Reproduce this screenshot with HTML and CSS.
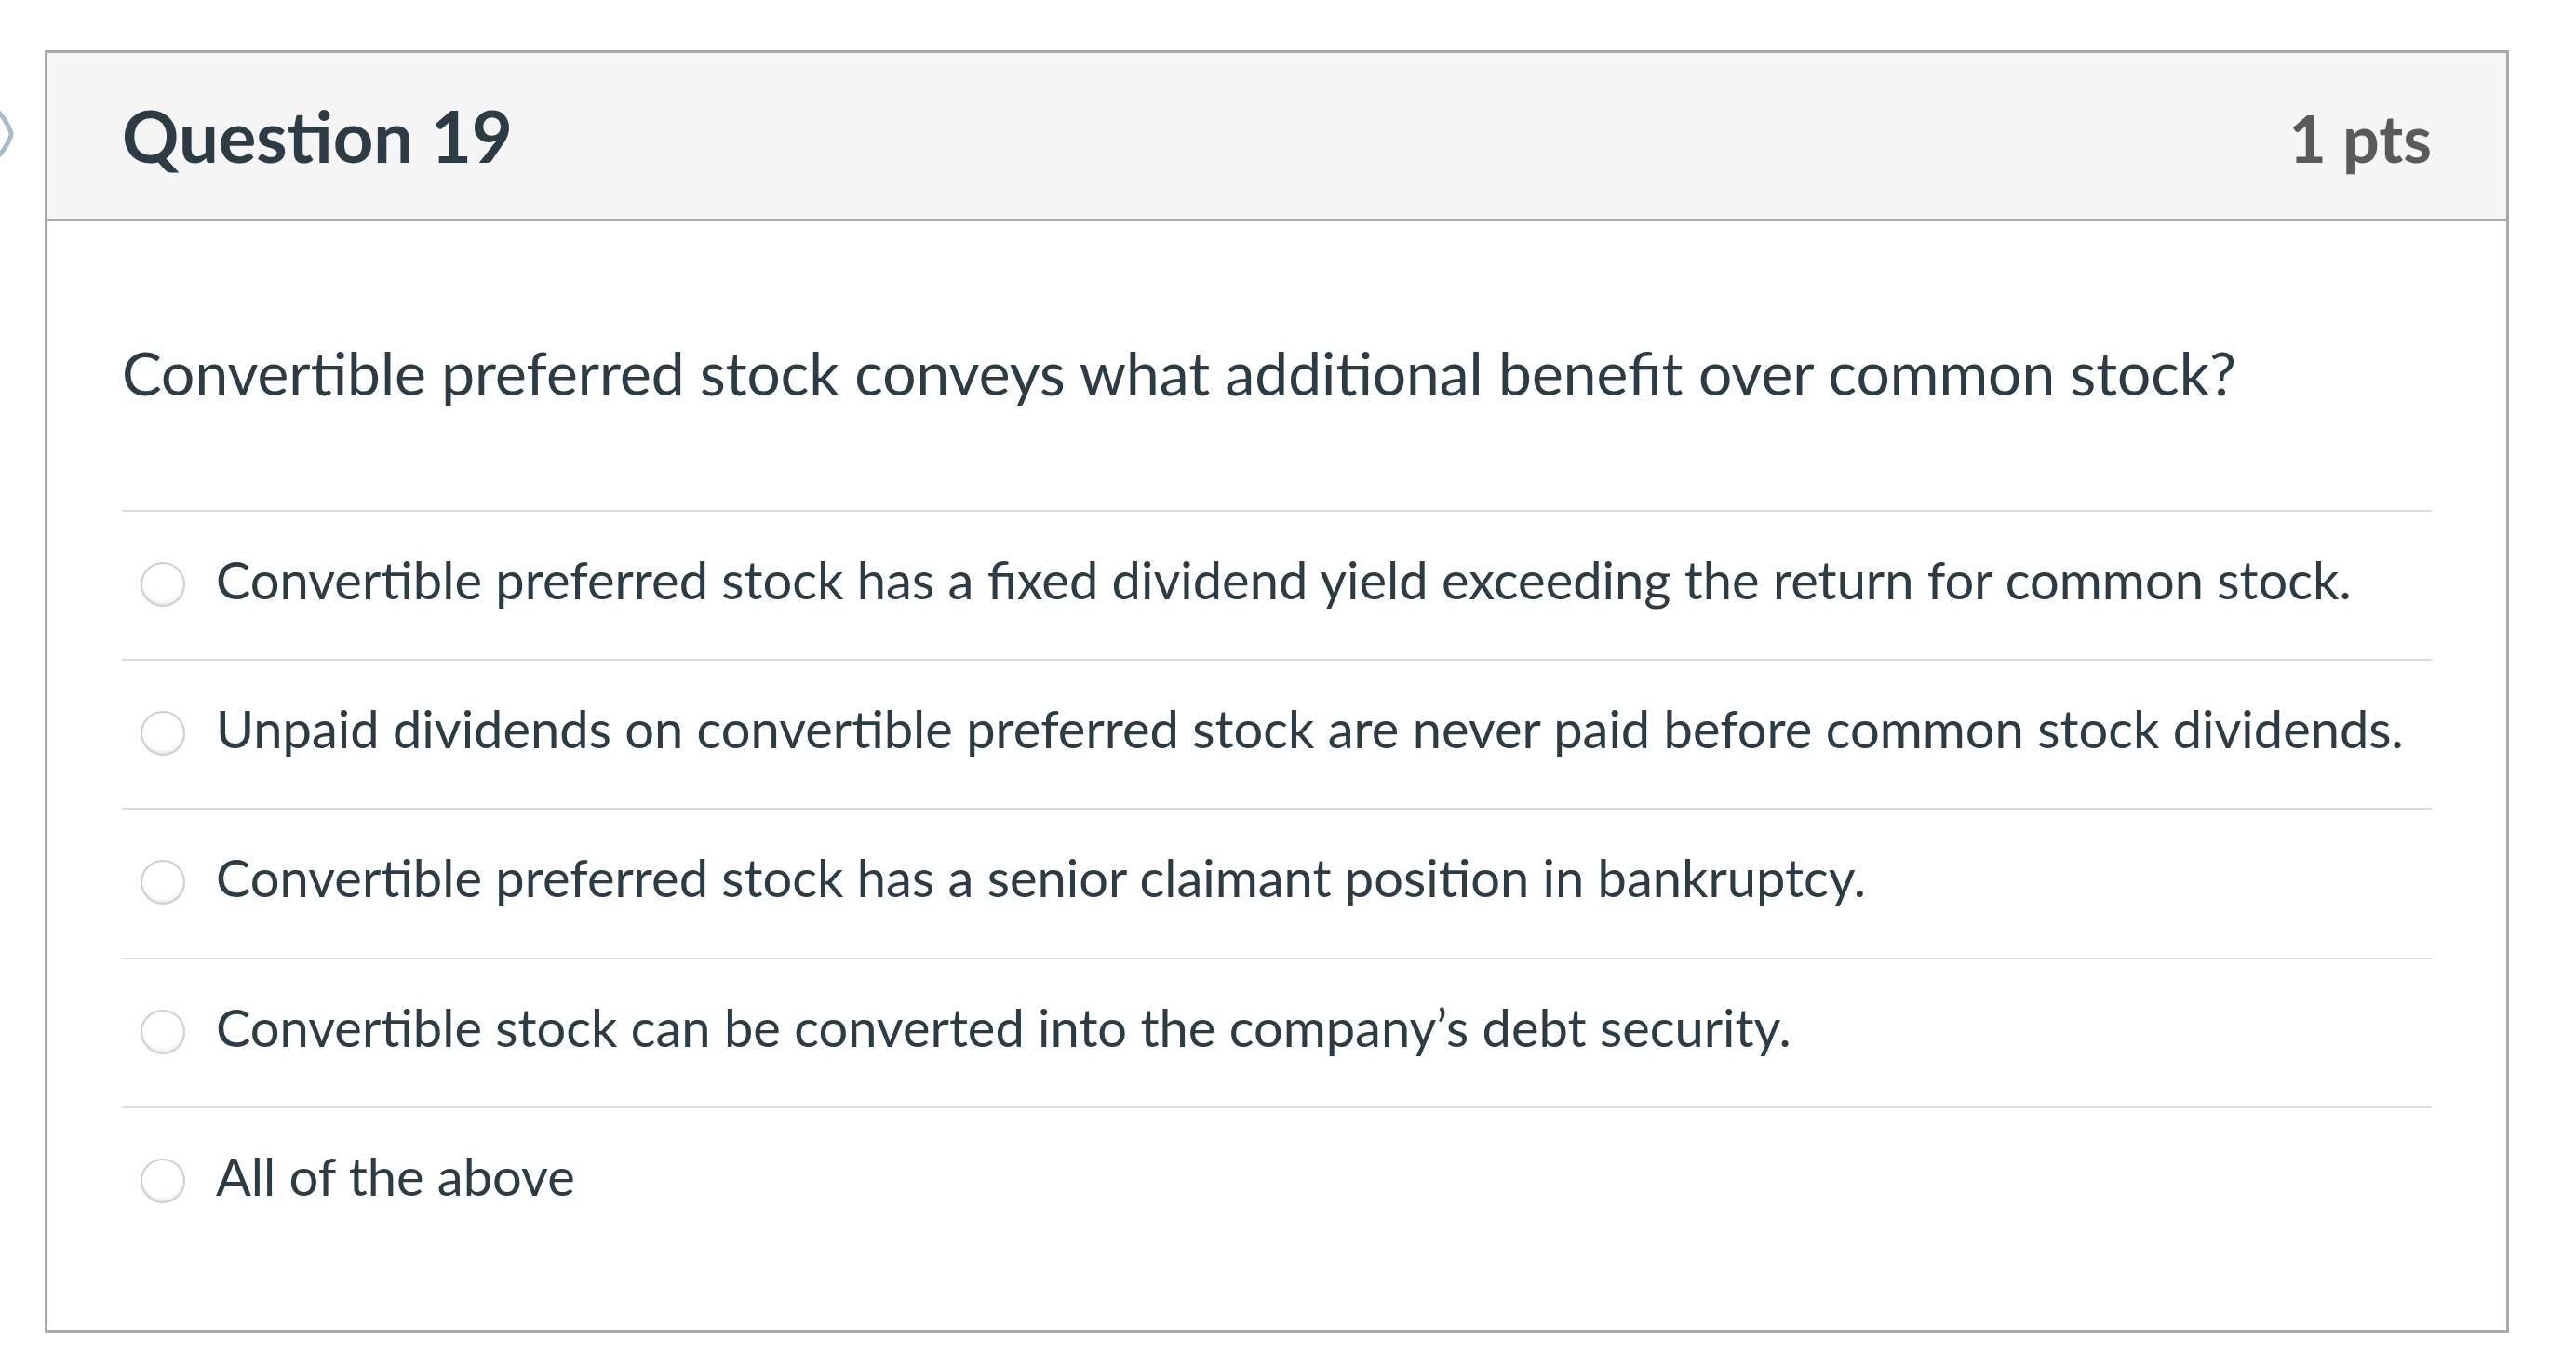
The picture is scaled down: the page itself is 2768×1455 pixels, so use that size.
FILE: index.html
```html
<!DOCTYPE html>
<html lang="en">
<head>
<meta charset="utf-8">
<title>Question 19</title>
<link rel="stylesheet" href="styles.css">
</head>
<body>
<svg class="flag" width="18" height="60" viewBox="0 0 18 60" aria-hidden="true">
  <path d="M-2 6 Q6 14 11 26 Q13 30 11 34 Q6 46 -2 54" fill="none" stroke="#a9bccd" stroke-width="5" stroke-linecap="round"/>
</svg>
<div class="question">
  <div class="header">
    <span class="name">Question 19</span>
    <span class="points">1 pts</span>
  </div>
  <div class="body">
    <p class="text">Convertible preferred stock conveys what additional benefit over common stock?</p>
    <div class="answers">
      <label class="answer"><span class="radio"></span><span class="label">Convertible preferred stock has a fixed dividend yield exceeding the return for common stock.</span></label>
      <label class="answer"><span class="radio"></span><span class="label">Unpaid dividends on convertible preferred stock are never paid before common stock dividends.</span></label>
      <label class="answer"><span class="radio"></span><span class="label">Convertible preferred stock has a senior claimant position in bankruptcy.</span></label>
      <label class="answer"><span class="radio"></span><span class="label">Convertible stock can be converted into the company’s debt security.</span></label>
      <label class="answer"><span class="radio"></span><span class="label">All of the above</span></label>
    </div>
  </div>
</div>
</body>
</html>
```
FILE: styles.css
```css
html, body {
  margin: 0;
  padding: 0;
  background: #ffffff;
}
body {
  position: relative;
  font-family: Lato, "Open Sans", "Liberation Sans", sans-serif;
  color: #2d3b45;
  padding-top: 54px;
}
.flag {
  position: absolute;
  left: 0;
  top: 114px;
}
.question {
  margin-left: 48px;
  width: 2648px;
  box-sizing: border-box;
  border: 3px solid #a9a9a9;
}
.header {
  display: flex;
  justify-content: space-between;
  align-items: baseline;
  background: #f5f5f5;
  border-bottom: 3px solid #aaaaaa;
  padding: 43px 80px 44px 80px;
}
.name {
  font-size: 76px;
  font-weight: 700;
  line-height: 1.2;
  color: #2d3b45;
}
.points {
  font-size: 70px;
  font-weight: 700;
  line-height: 1.2;
  color: #5a5a5a;
}
.body {
  padding: 125px 80px 80px 80px;
}
.text {
  margin: 0 0 108px 0;
  font-size: 64px;
  line-height: 1.2;
}
.answer {
  display: flex;
  align-items: flex-start;
  border-top: 2px solid #dddddd;
  padding: 39px 0 52px 20px;
}
.radio {
  flex: none;
  width: 44px;
  height: 44px;
  margin-top: 15px;
  border-radius: 50%;
  border: 2px solid #cfcfcf;
  background: radial-gradient(circle at 50% 40%, #ffffff 55%, #f0f0f0 100%);
  box-shadow: inset 0 -2px 3px rgba(0,0,0,0.06);
}
.label {
  margin-left: 33px;
  font-size: 56px;
  line-height: 1.2;
  white-space: nowrap;
}
```
